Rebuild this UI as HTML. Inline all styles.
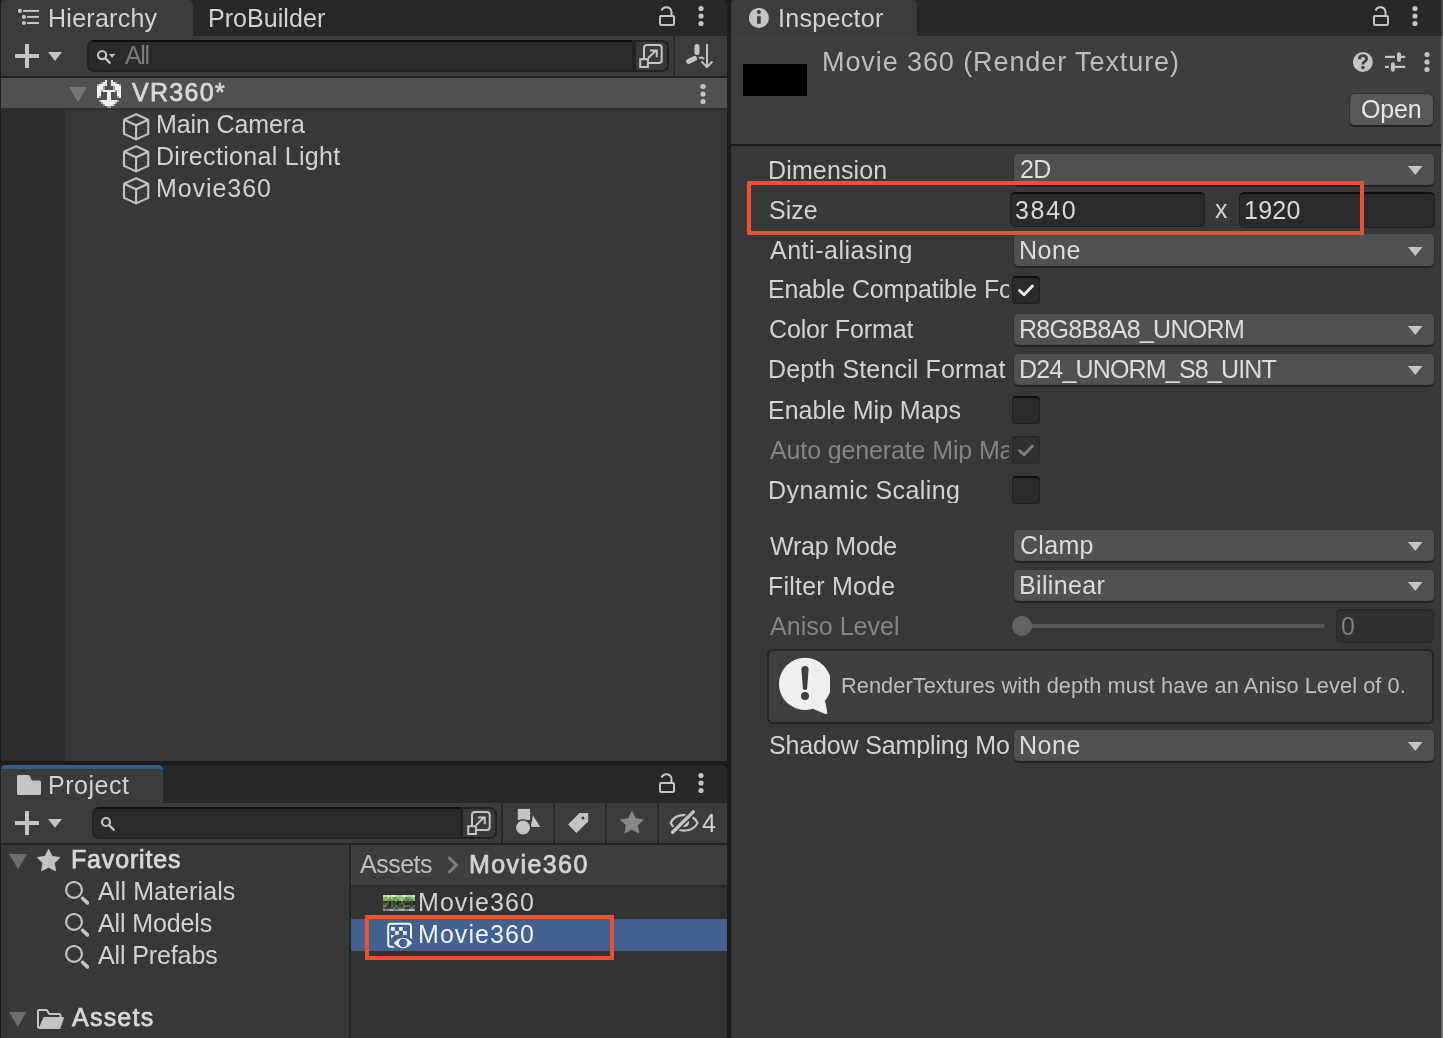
<!DOCTYPE html>
<html><head><meta charset="utf-8"><style>
html,body{margin:0;padding:0;width:1443px;height:1038px;overflow:hidden;background:#1C1C1C;}
body{position:relative;font-family:"Liberation Sans",sans-serif;}
body>div,body>svg{position:absolute;}
.t{white-space:nowrap;will-change:transform;}
</style></head><body>
<div style="left:0px;top:0px;width:1443px;height:1038px;background:#1C1C1C;"></div>
<div style="left:1px;top:0px;width:726px;height:35.5px;background:#282828;border-top-right-radius:5px;"></div>
<div style="left:1px;top:0px;width:192px;height:35.5px;background:#3C3C3C;border-top-left-radius:5px;border-top-right-radius:5px;"></div>
<svg style="left:17px;top:8px;" width="24" height="18" viewBox="0 0 24 18"><circle cx="2.9" cy="2.9" r="2.05" fill="#C4C4C4"/><circle cx="6.9" cy="8.9" r="2.05" fill="#C4C4C4"/><circle cx="6.9" cy="15" r="2.05" fill="#C4C4C4"/><rect x="6.1" y="1.9" width="15.9" height="2" fill="#C4C4C4"/><rect x="10.1" y="7.9" width="11.9" height="2" fill="#C4C4C4"/><rect x="10.1" y="14" width="11.9" height="2" fill="#C4C4C4"/></svg>
<div class="t" style="left:48.20px;top:5.84px;font-size:25px;line-height:25px;color:#D2D2D2;letter-spacing:0.262px;">Hierarchy</div>
<div class="t" style="left:207.80px;top:5.84px;font-size:25px;line-height:25px;color:#D2D2D2;letter-spacing:0.056px;">ProBuilder</div>
<svg style="left:658px;top:5.199999999999999px;" width="20" height="24" viewBox="0 0 20 24"><rect x="2" y="11" width="14" height="9" fill="none" stroke="#C4C4C4" stroke-width="2" rx="1"/><path d="M3.5 5.5 A5.2 5.2 0 0 1 13.5 7 V11" fill="none" stroke="#C4C4C4" stroke-width="2"/></svg>
<svg style="left:697px;top:4px;" width="8" height="24" viewBox="0 0 8 24"><circle cx="4" cy="4.5" r="2.6" fill="#C4C4C4"/><circle cx="4" cy="12" r="2.6" fill="#C4C4C4"/><circle cx="4" cy="19.5" r="2.6" fill="#C4C4C4"/></svg>
<div style="left:1px;top:35.5px;width:726px;height:40.5px;background:#3C3C3C;"></div>
<div style="left:15px;top:54px;width:24px;height:4px;background:#C4C4C4;"></div>
<div style="left:25px;top:44px;width:4px;height:24px;background:#C4C4C4;"></div>
<svg style="left:48px;top:52px;" width="14" height="9" viewBox="0 0 14 9"><path d="M0 0 L14 0 L7.0 9 Z" fill="#C4C4C4"/></svg>
<div style="left:87px;top:40px;width:581.5px;height:31.5px;background:#222222;border-radius:7px;"></div>
<div style="left:89px;top:42px;width:543px;height:27.5px;background:#2A2A2A;border-radius:5px 0 0 5px;"></div>
<div style="left:92px;top:40px;width:540px;height:2px;background:#0E0E0E;"></div>
<div style="left:635.5px;top:42px;width:31.0px;height:27.5px;background:#3A3A3A;border-radius:0 5px 5px 0;"></div>
<svg style="left:94.80000000000001px;top:47.8px;" width="22.2" height="22.2" viewBox="0 0 22.2 22.2"><circle cx="7.1" cy="7.1" r="4.1" fill="none" stroke="#C4C4C4" stroke-width="2.2"/><line x1="10.174999999999999" y1="10.174999999999999" x2="15.375" y2="15.375" stroke="#C4C4C4" stroke-width="2.4" stroke-linecap="butt"/></svg>
<svg style="left:108.9px;top:54px;" width="6.2" height="4" viewBox="0 0 6.2 4"><path d="M0 0 L6.2 0 L3.1 4 Z" fill="#C4C4C4"/></svg>
<div class="t" style="left:125.40px;top:42.64px;font-size:25px;line-height:25px;color:#7B7B7B;letter-spacing:-1.325px;">All</div>
<svg style="left:639px;top:42.5px;" width="26" height="26" viewBox="0 0 26 26"><rect x="5" y="2" width="17.7" height="17.9" rx="3" fill="none" stroke="#C4C4C4" stroke-width="2"/><rect x="1.2" y="16.2" width="7.7" height="7.8" fill="#3A3A3A" stroke="#C4C4C4" stroke-width="2"/><path d="M9 15.2 L17.4 7 M11 7.4 H17.8 V14.3" fill="none" stroke="#C4C4C4" stroke-width="2"/></svg>
<div style="left:673px;top:35.5px;width:2px;height:40.5px;background:#2A2A2A;"></div>
<svg style="left:684px;top:43px;" width="32" height="27" viewBox="0 0 32 27"><path d="M13 3.5 V9.5" stroke="#C4C4C4" stroke-width="5" stroke-linecap="round"/><path d="M4.5 18.5 L10.5 15.5" stroke="#C4C4C4" stroke-width="5" stroke-linecap="round"/><path d="M15 15 Q18 13.5 20 16" stroke="#C4C4C4" stroke-width="2" fill="none"/><path d="M23 1 V24 M17.5 18.5 L23 24 L28.5 18.5" stroke="#C4C4C4" stroke-width="2" fill="none"/></svg>
<div style="left:1px;top:76px;width:726px;height:2px;background:#232323;"></div>
<div style="left:1px;top:78px;width:726px;height:30px;background:#505050;"></div>
<svg style="left:69px;top:87px;" width="18" height="15" viewBox="0 0 18 15"><path d="M0 0 L18 0 L9.0 15 Z" fill="#767676"/></svg>
<svg style="left:97px;top:80px;shape-rendering:crispEdges;" width="24" height="28" viewBox="0 0 24 28"><rect x="8" y="0" width="2" height="2" fill="#F0F0F0"/><rect x="14" y="0" width="2" height="2" fill="#F0F0F0"/><rect x="4" y="2" width="2" height="2" fill="#A0A0A0"/><rect x="6" y="2" width="2" height="2" fill="#F0F0F0"/><rect x="8" y="2" width="2" height="2" fill="#F0F0F0"/><rect x="14" y="2" width="2" height="2" fill="#F0F0F0"/><rect x="16" y="2" width="2" height="2" fill="#F0F0F0"/><rect x="18" y="2" width="2" height="2" fill="#A0A0A0"/><rect x="0" y="4" width="2" height="2" fill="#A0A0A0"/><rect x="2" y="4" width="2" height="2" fill="#F0F0F0"/><rect x="4" y="4" width="2" height="2" fill="#F0F0F0"/><rect x="6" y="4" width="2" height="2" fill="#F0F0F0"/><rect x="8" y="4" width="2" height="2" fill="#F0F0F0"/><rect x="14" y="4" width="2" height="2" fill="#F0F0F0"/><rect x="16" y="4" width="2" height="2" fill="#F0F0F0"/><rect x="18" y="4" width="2" height="2" fill="#F0F0F0"/><rect x="20" y="4" width="2" height="2" fill="#F0F0F0"/><rect x="22" y="4" width="2" height="2" fill="#A0A0A0"/><rect x="0" y="6" width="2" height="2" fill="#F0F0F0"/><rect x="2" y="6" width="2" height="2" fill="#F0F0F0"/><rect x="4" y="6" width="2" height="2" fill="#F0F0F0"/><rect x="6" y="6" width="2" height="2" fill="#A0A0A0"/><rect x="16" y="6" width="2" height="2" fill="#A0A0A0"/><rect x="18" y="6" width="2" height="2" fill="#F0F0F0"/><rect x="20" y="6" width="2" height="2" fill="#F0F0F0"/><rect x="22" y="6" width="2" height="2" fill="#F0F0F0"/><rect x="0" y="8" width="2" height="2" fill="#F0F0F0"/><rect x="2" y="8" width="2" height="2" fill="#F0F0F0"/><rect x="4" y="8" width="2" height="2" fill="#F0F0F0"/><rect x="6" y="8" width="2" height="2" fill="#A0A0A0"/><rect x="16" y="8" width="2" height="2" fill="#A0A0A0"/><rect x="18" y="8" width="2" height="2" fill="#F0F0F0"/><rect x="20" y="8" width="2" height="2" fill="#F0F0F0"/><rect x="22" y="8" width="2" height="2" fill="#F0F0F0"/><rect x="0" y="10" width="2" height="2" fill="#F0F0F0"/><rect x="2" y="10" width="2" height="2" fill="#F0F0F0"/><rect x="4" y="10" width="2" height="2" fill="#A0A0A0"/><rect x="6" y="10" width="2" height="2" fill="#F0F0F0"/><rect x="8" y="10" width="2" height="2" fill="#F0F0F0"/><rect x="10" y="10" width="2" height="2" fill="#F0F0F0"/><rect x="12" y="10" width="2" height="2" fill="#F0F0F0"/><rect x="14" y="10" width="2" height="2" fill="#F0F0F0"/><rect x="16" y="10" width="2" height="2" fill="#F0F0F0"/><rect x="18" y="10" width="2" height="2" fill="#A0A0A0"/><rect x="20" y="10" width="2" height="2" fill="#F0F0F0"/><rect x="22" y="10" width="2" height="2" fill="#F0F0F0"/><rect x="0" y="12" width="2" height="2" fill="#F0F0F0"/><rect x="2" y="12" width="2" height="2" fill="#F0F0F0"/><rect x="10" y="12" width="2" height="2" fill="#F0F0F0"/><rect x="12" y="12" width="2" height="2" fill="#F0F0F0"/><rect x="20" y="12" width="2" height="2" fill="#F0F0F0"/><rect x="22" y="12" width="2" height="2" fill="#F0F0F0"/><rect x="0" y="14" width="2" height="2" fill="#F0F0F0"/><rect x="2" y="14" width="2" height="2" fill="#F0F0F0"/><rect x="10" y="14" width="2" height="2" fill="#F0F0F0"/><rect x="12" y="14" width="2" height="2" fill="#F0F0F0"/><rect x="20" y="14" width="2" height="2" fill="#F0F0F0"/><rect x="22" y="14" width="2" height="2" fill="#F0F0F0"/><rect x="0" y="16" width="2" height="2" fill="#F0F0F0"/><rect x="2" y="16" width="2" height="2" fill="#A0A0A0"/><rect x="10" y="16" width="2" height="2" fill="#F0F0F0"/><rect x="12" y="16" width="2" height="2" fill="#F0F0F0"/><rect x="20" y="16" width="2" height="2" fill="#A0A0A0"/><rect x="22" y="16" width="2" height="2" fill="#F0F0F0"/><rect x="10" y="18" width="2" height="2" fill="#F0F0F0"/><rect x="12" y="18" width="2" height="2" fill="#F0F0F0"/><rect x="2" y="20" width="2" height="2" fill="#A0A0A0"/><rect x="4" y="20" width="2" height="2" fill="#F0F0F0"/><rect x="6" y="20" width="2" height="2" fill="#F0F0F0"/><rect x="8" y="20" width="2" height="2" fill="#F0F0F0"/><rect x="10" y="20" width="2" height="2" fill="#F0F0F0"/><rect x="12" y="20" width="2" height="2" fill="#F0F0F0"/><rect x="14" y="20" width="2" height="2" fill="#F0F0F0"/><rect x="16" y="20" width="2" height="2" fill="#F0F0F0"/><rect x="18" y="20" width="2" height="2" fill="#F0F0F0"/><rect x="20" y="20" width="2" height="2" fill="#A0A0A0"/><rect x="4" y="22" width="2" height="2" fill="#A0A0A0"/><rect x="6" y="22" width="2" height="2" fill="#F0F0F0"/><rect x="8" y="22" width="2" height="2" fill="#F0F0F0"/><rect x="10" y="22" width="2" height="2" fill="#F0F0F0"/><rect x="12" y="22" width="2" height="2" fill="#F0F0F0"/><rect x="14" y="22" width="2" height="2" fill="#F0F0F0"/><rect x="16" y="22" width="2" height="2" fill="#F0F0F0"/><rect x="18" y="22" width="2" height="2" fill="#A0A0A0"/><rect x="6" y="24" width="2" height="2" fill="#A0A0A0"/><rect x="8" y="24" width="2" height="2" fill="#F0F0F0"/><rect x="10" y="24" width="2" height="2" fill="#F0F0F0"/><rect x="12" y="24" width="2" height="2" fill="#F0F0F0"/><rect x="14" y="24" width="2" height="2" fill="#F0F0F0"/><rect x="16" y="24" width="2" height="2" fill="#A0A0A0"/><rect x="10" y="26" width="2" height="2" fill="#A0A0A0"/><rect x="12" y="26" width="2" height="2" fill="#A0A0A0"/></svg>
<div class="t" style="left:132.00px;top:79.84px;font-size:25px;line-height:25px;color:#D8D8D8;letter-spacing:1.290px;-webkit-text-stroke:0.75px #D8D8D8;">VR360*</div>
<svg style="left:699.2px;top:82px;" width="8" height="24" viewBox="0 0 8 24"><circle cx="4" cy="4.5" r="2.6" fill="#C4C4C4"/><circle cx="4" cy="12" r="2.6" fill="#C4C4C4"/><circle cx="4" cy="19.5" r="2.6" fill="#C4C4C4"/></svg>
<div style="left:1px;top:108px;width:726px;height:2px;background:#2D2D2D;"></div>
<div style="left:1px;top:110px;width:726px;height:651px;background:#383838;"></div>
<div style="left:1px;top:110px;width:64px;height:651px;background:#2C2C2C;"></div>
<svg style="left:122px;top:111.5px;" width="28" height="30" viewBox="0 0 28 30"><path d="M14.1 2.3 L26.2 7.7 V21.9 L14.1 27.4 L2 21.9 V7.7 Z M2 7.7 L14.1 13.3 L26.2 7.7 M14.1 13.3 V27.4" fill="none" stroke="#C4C4C4" stroke-width="2.1" stroke-linejoin="round"/></svg>
<div class="t" style="left:156.20px;top:111.84px;font-size:25px;line-height:25px;color:#D2D2D2;letter-spacing:-0.125px;">Main Camera</div>
<svg style="left:122px;top:143.5px;" width="28" height="30" viewBox="0 0 28 30"><path d="M14.1 2.3 L26.2 7.7 V21.9 L14.1 27.4 L2 21.9 V7.7 Z M2 7.7 L14.1 13.3 L26.2 7.7 M14.1 13.3 V27.4" fill="none" stroke="#C4C4C4" stroke-width="2.1" stroke-linejoin="round"/></svg>
<div class="t" style="left:156.20px;top:143.84px;font-size:25px;line-height:25px;color:#D2D2D2;letter-spacing:0.312px;">Directional Light</div>
<svg style="left:122px;top:175.5px;" width="28" height="30" viewBox="0 0 28 30"><path d="M14.1 2.3 L26.2 7.7 V21.9 L14.1 27.4 L2 21.9 V7.7 Z M2 7.7 L14.1 13.3 L26.2 7.7 M14.1 13.3 V27.4" fill="none" stroke="#C4C4C4" stroke-width="2.1" stroke-linejoin="round"/></svg>
<div class="t" style="left:156.20px;top:175.84px;font-size:25px;line-height:25px;color:#D2D2D2;letter-spacing:0.929px;">Movie360</div>
<div style="left:1px;top:765px;width:726px;height:38px;background:#282828;border-top-right-radius:5px;"></div>
<div style="left:1px;top:765px;width:162px;height:38px;background:#3C3C3C;border-top-left-radius:5px;border-top-right-radius:5px;border-top:4px solid #395E88;box-sizing:border-box;"></div>
<svg style="left:16px;top:774px;" width="26" height="22" viewBox="0 0 26 22"><path d="M2.5 1 H12 Q13 1 13.6 2 L16 6.5 H23.5 Q25 6.5 25 8 V19.5 Q25 21 23.5 21 H2.5 Q1 21 1 19.5 V2.5 Q1 1 2.5 1 Z" fill="#C4C4C4"/></svg>
<div class="t" style="left:48.20px;top:772.84px;font-size:25px;line-height:25px;color:#D2D2D2;letter-spacing:0.517px;">Project</div>
<svg style="left:658px;top:772.2px;" width="20" height="24" viewBox="0 0 20 24"><rect x="2" y="11" width="14" height="9" fill="none" stroke="#C4C4C4" stroke-width="2" rx="1"/><path d="M3.5 5.5 A5.2 5.2 0 0 1 13.5 7 V11" fill="none" stroke="#C4C4C4" stroke-width="2"/></svg>
<svg style="left:697px;top:771px;" width="8" height="24" viewBox="0 0 8 24"><circle cx="4" cy="4.5" r="2.6" fill="#C4C4C4"/><circle cx="4" cy="12" r="2.6" fill="#C4C4C4"/><circle cx="4" cy="19.5" r="2.6" fill="#C4C4C4"/></svg>
<div style="left:1px;top:803px;width:726px;height:39.5px;background:#3C3C3C;"></div>
<div style="left:15px;top:821px;width:24px;height:4px;background:#C4C4C4;"></div>
<div style="left:25px;top:811px;width:4px;height:24px;background:#C4C4C4;"></div>
<svg style="left:48px;top:819px;" width="14" height="8.7" viewBox="0 0 14 8.7"><path d="M0 0 L14 0 L7.0 8.7 Z" fill="#C4C4C4"/></svg>
<div style="left:91.5px;top:807px;width:405.0px;height:31.5px;background:#222222;border-radius:7px;"></div>
<div style="left:93.5px;top:809px;width:366.0px;height:27.5px;background:#2A2A2A;border-radius:5px 0 0 5px;"></div>
<div style="left:96.5px;top:807px;width:363.0px;height:2px;background:#0E0E0E;"></div>
<div style="left:463.0px;top:809px;width:31.5px;height:27.5px;background:#3A3A3A;border-radius:0 5px 5px 0;"></div>
<svg style="left:99.0px;top:814.9px;" width="22.0" height="22.0" viewBox="0 0 22.0 22.0"><circle cx="7.0" cy="7.0" r="4.0" fill="none" stroke="#C4C4C4" stroke-width="2.2"/><line x1="10.0" y1="10.0" x2="15.3" y2="15.3" stroke="#C4C4C4" stroke-width="2.4" stroke-linecap="butt"/></svg>
<svg style="left:467px;top:809.5px;" width="26" height="26" viewBox="0 0 26 26"><rect x="5" y="2" width="17.7" height="17.9" rx="3" fill="none" stroke="#C4C4C4" stroke-width="2"/><rect x="1.2" y="16.2" width="7.7" height="7.8" fill="#3A3A3A" stroke="#C4C4C4" stroke-width="2"/><path d="M9 15.2 L17.4 7 M11 7.4 H17.8 V14.3" fill="none" stroke="#C4C4C4" stroke-width="2"/></svg>
<div style="left:501.3px;top:803px;width:2.0px;height:39.5px;background:#2A2A2A;"></div>
<div style="left:553px;top:803px;width:2px;height:39.5px;background:#2A2A2A;"></div>
<div style="left:605.2px;top:803px;width:2.0px;height:39.5px;background:#2A2A2A;"></div>
<div style="left:657px;top:803px;width:2px;height:39.5px;background:#2A2A2A;"></div>
<svg style="left:514px;top:808px;" width="28" height="28" viewBox="0 0 28 28"><rect x="3.8" y="0.9" width="12.3" height="11.1" fill="#C4C4C4"/><path d="M19.1 7.5 L26.2 18.9 H16.5 Z" fill="#C4C4C4"/><circle cx="9" cy="19.6" r="7.8" fill="#C4C4C4" stroke="#3C3C3C" stroke-width="1.6"/></svg>
<svg style="left:566px;top:811px;" width="24" height="24" viewBox="0 0 24 24"><path d="M2.1 13.5 L13.5 2 H22.2 V10.4 L10.4 22 Z" fill="#C4C4C4"/><circle cx="17" cy="6.9" r="1.5" fill="#3C3C3C"/></svg>
<svg style="left:619px;top:811px;" width="26" height="24" viewBox="0 0 26 24"><path d="M12.90 0.50 L16.40 7.59 L24.22 8.72 L18.56 14.24 L19.89 22.03 L12.90 18.35 L5.91 22.03 L7.24 14.24 L1.58 8.72 L9.40 7.59 Z" fill="#888888" stroke="#888888" stroke-width="0.8" stroke-linejoin="round"/></svg>
<svg style="left:669px;top:809px;" width="31" height="26" viewBox="0 0 31 26"><path d="M1.6 13.9 C6.5 3.6 23.6 3.6 28.5 13.9 C23.6 24.2 6.5 24.2 1.6 13.9 Z" fill="none" stroke="#C4C4C4" stroke-width="2.2"/><circle cx="15.5" cy="13.4" r="4.6" fill="#C4C4C4"/><path d="M3.6 23.2 L24.3 2.9" stroke="#3C3C3C" stroke-width="6.5"/><path d="M3.6 23.2 L24.3 2.9" stroke="#C4C4C4" stroke-width="3.4" stroke-linecap="round"/></svg>
<div class="t" style="left:702.40px;top:810.74px;font-size:25px;line-height:25px;color:#D2D2D2;">4</div>
<div style="left:1px;top:842.5px;width:726px;height:2.5px;background:#232323;"></div>
<div style="left:1px;top:845px;width:348px;height:193px;background:#383838;"></div>
<div style="left:349px;top:845px;width:2px;height:193px;background:#232323;"></div>
<div style="left:351px;top:845px;width:376px;height:40px;background:#3E3E3E;"></div>
<div style="left:351px;top:885px;width:376px;height:2px;background:#2B2B2B;"></div>
<div style="left:351px;top:887px;width:376px;height:151px;background:#333333;"></div>
<svg style="left:9px;top:854px;" width="18" height="15" viewBox="0 0 18 15"><path d="M0 0 L18 0 L9.0 15 Z" fill="#6E6E6E"/></svg>
<svg style="left:36px;top:849px;" width="26" height="23" viewBox="0 0 26 23"><path d="M12.60 0.20 L16.13 7.35 L24.01 8.49 L18.31 14.05 L19.65 21.91 L12.60 18.20 L5.55 21.91 L6.89 14.05 L1.19 8.49 L9.07 7.35 Z" fill="#C4C4C4" stroke="#C4C4C4" stroke-width="0.8" stroke-linejoin="round"/></svg>
<div class="t" style="left:70.50px;top:846.64px;font-size:25px;line-height:25px;color:#D8D8D8;letter-spacing:0.825px;-webkit-text-stroke:0.75px #D8D8D8;">Favorites</div>
<svg style="left:62px;top:878px;" width="30" height="30" viewBox="0 0 30 30"><circle cx="12" cy="11.9" r="7.9" fill="none" stroke="#C4C4C4" stroke-width="2.2"/><path d="M20.6 20.3 L25.4 24.9" stroke="#C4C4C4" stroke-width="3.6" stroke-linecap="round"/></svg>
<div class="t" style="left:97.80px;top:878.84px;font-size:25px;line-height:25px;color:#D2D2D2;letter-spacing:0.100px;">All Materials</div>
<svg style="left:62px;top:910px;" width="30" height="30" viewBox="0 0 30 30"><circle cx="12" cy="11.9" r="7.9" fill="none" stroke="#C4C4C4" stroke-width="2.2"/><path d="M20.6 20.3 L25.4 24.9" stroke="#C4C4C4" stroke-width="3.6" stroke-linecap="round"/></svg>
<div class="t" style="left:97.80px;top:910.84px;font-size:25px;line-height:25px;color:#D2D2D2;letter-spacing:-0.127px;">All Models</div>
<svg style="left:62px;top:942px;" width="30" height="30" viewBox="0 0 30 30"><circle cx="12" cy="11.9" r="7.9" fill="none" stroke="#C4C4C4" stroke-width="2.2"/><path d="M20.6 20.3 L25.4 24.9" stroke="#C4C4C4" stroke-width="3.6" stroke-linecap="round"/></svg>
<div class="t" style="left:97.80px;top:942.84px;font-size:25px;line-height:25px;color:#D2D2D2;letter-spacing:-0.120px;">All Prefabs</div>
<svg style="left:9px;top:1012px;" width="17.5" height="15" viewBox="0 0 17.5 15"><path d="M0 0 L17.5 0 L8.75 15 Z" fill="#6E6E6E"/></svg>
<svg style="left:36px;top:1008px;" width="29" height="22" viewBox="0 0 29 22"><path d="M2 20 V3 Q2 1.9 3.1 1.9 H10.6 L13.4 6.1 H23.5 Q24.5 6.1 24.5 7.1 V9.5" fill="none" stroke="#C4C4C4" stroke-width="2"/><path d="M7.3 9.6 Q7.8 9 8.6 9 H27 Q28.3 9.1 27.9 10.3 L24.6 20.1 Q24.3 20.9 23.4 20.9 H2.4 Z" fill="#C4C4C4"/></svg>
<div class="t" style="left:72.20px;top:1005.14px;font-size:25px;line-height:25px;color:#D8D8D8;letter-spacing:1.230px;-webkit-text-stroke:0.75px #D8D8D8;">Assets</div>
<div class="t" style="left:360.40px;top:851.84px;font-size:25px;line-height:25px;color:#BEBEBE;letter-spacing:-0.490px;">Assets</div>
<svg style="left:446px;top:855px;" width="14" height="20" viewBox="0 0 14 20"><path d="M2.5 2 L10.5 10 L2.5 18" fill="none" stroke="#7D7D7D" stroke-width="3"/></svg>
<div class="t" style="left:468.50px;top:851.84px;font-size:25px;line-height:25px;color:#D2D2D2;letter-spacing:1.414px;-webkit-text-stroke:0.75px #D2D2D2;">Movie360</div>
<svg style="left:383px;top:895px;shape-rendering:crispEdges;" width="32" height="16" viewBox="0 0 32 16"><rect x="0" y="0" width="2" height="2" fill="rgb(200, 233, 206)"/><rect x="2" y="0" width="2" height="2" fill="rgb(163, 203, 154)"/><rect x="4" y="0" width="2" height="2" fill="rgb(219, 227, 207)"/><rect x="6" y="0" width="2" height="2" fill="rgb(183, 209, 185)"/><rect x="8" y="0" width="2" height="2" fill="rgb(210, 240, 200)"/><rect x="10" y="0" width="2" height="2" fill="rgb(238, 251, 233)"/><rect x="12" y="0" width="2" height="2" fill="rgb(177, 215, 180)"/><rect x="14" y="0" width="2" height="2" fill="rgb(180, 205, 164)"/><rect x="16" y="0" width="2" height="2" fill="rgb(168, 187, 168)"/><rect x="18" y="0" width="2" height="2" fill="rgb(181, 210, 166)"/><rect x="20" y="0" width="2" height="2" fill="rgb(227, 255, 223)"/><rect x="22" y="0" width="2" height="2" fill="rgb(181, 221, 186)"/><rect x="24" y="0" width="2" height="2" fill="rgb(190, 207, 186)"/><rect x="26" y="0" width="2" height="2" fill="rgb(181, 189, 172)"/><rect x="28" y="0" width="2" height="2" fill="rgb(196, 223, 184)"/><rect x="30" y="0" width="2" height="2" fill="rgb(209, 238, 199)"/><rect x="0" y="2" width="2" height="2" fill="rgb(140, 178, 106)"/><rect x="2" y="2" width="2" height="2" fill="rgb(118, 174, 95)"/><rect x="4" y="2" width="2" height="2" fill="rgb(167, 202, 136)"/><rect x="6" y="2" width="2" height="2" fill="rgb(140, 163, 94)"/><rect x="8" y="2" width="2" height="2" fill="rgb(163, 195, 130)"/><rect x="10" y="2" width="2" height="2" fill="rgb(119, 157, 75)"/><rect x="12" y="2" width="2" height="2" fill="rgb(111, 152, 74)"/><rect x="14" y="2" width="2" height="2" fill="rgb(139, 187, 113)"/><rect x="16" y="2" width="2" height="2" fill="rgb(145, 185, 121)"/><rect x="18" y="2" width="2" height="2" fill="rgb(147, 186, 124)"/><rect x="20" y="2" width="2" height="2" fill="rgb(151, 194, 123)"/><rect x="22" y="2" width="2" height="2" fill="rgb(101, 138, 62)"/><rect x="24" y="2" width="2" height="2" fill="rgb(114, 140, 75)"/><rect x="26" y="2" width="2" height="2" fill="rgb(125, 168, 103)"/><rect x="28" y="2" width="2" height="2" fill="rgb(150, 177, 110)"/><rect x="30" y="2" width="2" height="2" fill="rgb(154, 199, 120)"/><rect x="0" y="4" width="2" height="2" fill="rgb(115, 159, 80)"/><rect x="2" y="4" width="2" height="2" fill="rgb(149, 190, 115)"/><rect x="4" y="4" width="2" height="2" fill="rgb(106, 149, 78)"/><rect x="6" y="4" width="2" height="2" fill="rgb(121, 154, 99)"/><rect x="8" y="4" width="2" height="2" fill="rgb(116, 157, 78)"/><rect x="10" y="4" width="2" height="2" fill="rgb(116, 160, 84)"/><rect x="12" y="4" width="2" height="2" fill="rgb(129, 181, 114)"/><rect x="14" y="4" width="2" height="2" fill="rgb(105, 148, 73)"/><rect x="16" y="4" width="2" height="2" fill="rgb(147, 187, 108)"/><rect x="18" y="4" width="2" height="2" fill="rgb(166, 198, 117)"/><rect x="20" y="4" width="2" height="2" fill="rgb(111, 155, 93)"/><rect x="22" y="4" width="2" height="2" fill="rgb(108, 155, 94)"/><rect x="24" y="4" width="2" height="2" fill="rgb(94, 131, 79)"/><rect x="26" y="4" width="2" height="2" fill="rgb(121, 147, 85)"/><rect x="28" y="4" width="2" height="2" fill="rgb(90, 134, 77)"/><rect x="30" y="4" width="2" height="2" fill="rgb(137, 193, 111)"/><rect x="0" y="6" width="2" height="2" fill="rgb(68, 75, 49)"/><rect x="2" y="6" width="2" height="2" fill="rgb(23, 50, 19)"/><rect x="4" y="6" width="2" height="2" fill="rgb(81, 90, 53)"/><rect x="6" y="6" width="2" height="2" fill="rgb(26, 48, 16)"/><rect x="8" y="6" width="2" height="2" fill="rgb(71, 97, 51)"/><rect x="10" y="6" width="2" height="2" fill="rgb(47, 57, 20)"/><rect x="12" y="6" width="2" height="2" fill="rgb(74, 105, 68)"/><rect x="14" y="6" width="2" height="2" fill="rgb(24, 47, 12)"/><rect x="16" y="6" width="2" height="2" fill="rgb(37, 48, 28)"/><rect x="18" y="6" width="2" height="2" fill="rgb(90, 99, 79)"/><rect x="20" y="6" width="2" height="2" fill="rgb(52, 54, 25)"/><rect x="22" y="6" width="2" height="2" fill="rgb(63, 77, 57)"/><rect x="24" y="6" width="2" height="2" fill="rgb(79, 83, 53)"/><rect x="26" y="6" width="2" height="2" fill="rgb(55, 63, 31)"/><rect x="28" y="6" width="2" height="2" fill="rgb(63, 75, 45)"/><rect x="30" y="6" width="2" height="2" fill="rgb(22, 33, 7)"/><rect x="0" y="8" width="2" height="2" fill="rgb(71, 90, 56)"/><rect x="2" y="8" width="2" height="2" fill="rgb(85, 100, 51)"/><rect x="4" y="8" width="2" height="2" fill="rgb(86, 92, 71)"/><rect x="6" y="8" width="2" height="2" fill="rgb(18, 42, 6)"/><rect x="8" y="8" width="2" height="2" fill="rgb(71, 94, 71)"/><rect x="10" y="8" width="2" height="2" fill="rgb(49, 74, 46)"/><rect x="12" y="8" width="2" height="2" fill="rgb(58, 76, 46)"/><rect x="14" y="8" width="2" height="2" fill="rgb(21, 40, 24)"/><rect x="16" y="8" width="2" height="2" fill="rgb(84, 83, 68)"/><rect x="18" y="8" width="2" height="2" fill="rgb(76, 84, 67)"/><rect x="20" y="8" width="2" height="2" fill="rgb(79, 90, 60)"/><rect x="22" y="8" width="2" height="2" fill="rgb(34, 37, 16)"/><rect x="24" y="8" width="2" height="2" fill="rgb(35, 44, 22)"/><rect x="26" y="8" width="2" height="2" fill="rgb(41, 63, 24)"/><rect x="28" y="8" width="2" height="2" fill="rgb(54, 78, 44)"/><rect x="30" y="8" width="2" height="2" fill="rgb(22, 47, 20)"/><rect x="0" y="10" width="2" height="2" fill="rgb(109, 122, 95)"/><rect x="2" y="10" width="2" height="2" fill="rgb(102, 124, 109)"/><rect x="4" y="10" width="2" height="2" fill="rgb(46, 47, 46)"/><rect x="6" y="10" width="2" height="2" fill="rgb(34, 45, 29)"/><rect x="8" y="10" width="2" height="2" fill="rgb(109, 103, 102)"/><rect x="10" y="10" width="2" height="2" fill="rgb(47, 63, 48)"/><rect x="12" y="10" width="2" height="2" fill="rgb(94, 118, 87)"/><rect x="14" y="10" width="2" height="2" fill="rgb(67, 79, 57)"/><rect x="16" y="10" width="2" height="2" fill="rgb(58, 66, 54)"/><rect x="18" y="10" width="2" height="2" fill="rgb(35, 57, 38)"/><rect x="20" y="10" width="2" height="2" fill="rgb(113, 120, 95)"/><rect x="22" y="10" width="2" height="2" fill="rgb(79, 91, 77)"/><rect x="24" y="10" width="2" height="2" fill="rgb(107, 108, 102)"/><rect x="26" y="10" width="2" height="2" fill="rgb(80, 79, 72)"/><rect x="28" y="10" width="2" height="2" fill="rgb(60, 60, 54)"/><rect x="30" y="10" width="2" height="2" fill="rgb(96, 98, 88)"/><rect x="0" y="12" width="2" height="2" fill="rgb(86, 100, 88)"/><rect x="2" y="12" width="2" height="2" fill="rgb(49, 75, 51)"/><rect x="4" y="12" width="2" height="2" fill="rgb(56, 62, 57)"/><rect x="6" y="12" width="2" height="2" fill="rgb(61, 80, 68)"/><rect x="8" y="12" width="2" height="2" fill="rgb(57, 65, 58)"/><rect x="10" y="12" width="2" height="2" fill="rgb(107, 115, 103)"/><rect x="12" y="12" width="2" height="2" fill="rgb(66, 75, 52)"/><rect x="14" y="12" width="2" height="2" fill="rgb(76, 96, 88)"/><rect x="16" y="12" width="2" height="2" fill="rgb(102, 98, 95)"/><rect x="18" y="12" width="2" height="2" fill="rgb(88, 101, 76)"/><rect x="20" y="12" width="2" height="2" fill="rgb(97, 108, 97)"/><rect x="22" y="12" width="2" height="2" fill="rgb(45, 61, 46)"/><rect x="24" y="12" width="2" height="2" fill="rgb(40, 53, 34)"/><rect x="26" y="12" width="2" height="2" fill="rgb(92, 106, 83)"/><rect x="28" y="12" width="2" height="2" fill="rgb(114, 126, 108)"/><rect x="30" y="12" width="2" height="2" fill="rgb(73, 89, 67)"/><rect x="0" y="14" width="2" height="2" fill="rgb(141, 135, 151)"/><rect x="2" y="14" width="2" height="2" fill="rgb(127, 114, 130)"/><rect x="4" y="14" width="2" height="2" fill="rgb(134, 127, 132)"/><rect x="6" y="14" width="2" height="2" fill="rgb(141, 157, 153)"/><rect x="8" y="14" width="2" height="2" fill="rgb(165, 166, 171)"/><rect x="10" y="14" width="2" height="2" fill="rgb(122, 142, 143)"/><rect x="12" y="14" width="2" height="2" fill="rgb(124, 132, 135)"/><rect x="14" y="14" width="2" height="2" fill="rgb(134, 142, 163)"/><rect x="16" y="14" width="2" height="2" fill="rgb(160, 155, 168)"/><rect x="18" y="14" width="2" height="2" fill="rgb(178, 172, 185)"/><rect x="20" y="14" width="2" height="2" fill="rgb(149, 162, 165)"/><rect x="22" y="14" width="2" height="2" fill="rgb(106, 127, 138)"/><rect x="24" y="14" width="2" height="2" fill="rgb(145, 149, 151)"/><rect x="26" y="14" width="2" height="2" fill="rgb(165, 187, 190)"/><rect x="28" y="14" width="2" height="2" fill="rgb(185, 185, 199)"/><rect x="30" y="14" width="2" height="2" fill="rgb(150, 156, 169)"/></svg>
<div class="t" style="left:418.00px;top:890.44px;font-size:25px;line-height:25px;color:#D2D2D2;letter-spacing:1.071px;">Movie360</div>
<div style="left:351px;top:919px;width:376px;height:32px;background:#42618F;"></div>
<svg style="left:385px;top:921px;" width="30" height="30" viewBox="0 0 30 30"><rect x="3.2" y="2.8" width="22.8" height="23" rx="2.5" fill="none" stroke="#F0F0F0" stroke-width="2"/><rect x="6" y="6" width="3.8" height="3.8" fill="#F0F0F0"/><rect x="14" y="6" width="3.8" height="3.8" fill="#F0F0F0"/><rect x="10" y="10" width="3.8" height="3.8" fill="#F0F0F0"/><rect x="18" y="10" width="3.8" height="3.8" fill="#F0F0F0"/><path d="M6 14 H9.8 L6 17.8 Z" fill="#F0F0F0"/><path d="M7 22 Q18 9 29 22 Q18 35 7 22 Z" fill="#F0F0F0" stroke="#42618F" stroke-width="2.5"/><circle cx="18.1" cy="22" r="4.2" fill="#42618F"/></svg>
<div class="t" style="left:418.00px;top:921.84px;font-size:25px;line-height:25px;color:#F2F2F2;letter-spacing:1.071px;">Movie360</div>
<div style="left:365px;top:915px;width:249px;height:45px;box-sizing:border-box;border:4px solid #EB5230;"></div>
<div style="left:731px;top:0px;width:710px;height:35.5px;background:#282828;"></div>
<div style="left:731px;top:0px;width:186px;height:35.5px;background:#3C3C3C;border-top-left-radius:5px;border-top-right-radius:5px;"></div>
<svg style="left:749px;top:8px;" width="21" height="21" viewBox="0 0 21 21"><circle cx="9.9" cy="9.9" r="10" fill="#C4C4C4"/><circle cx="9.9" cy="4.1" r="2" fill="#3C3C3C"/><rect x="8.1" y="8.2" width="3.6" height="7.6" fill="#3C3C3C"/></svg>
<div class="t" style="left:777.95px;top:5.84px;font-size:25px;line-height:25px;color:#D2D2D2;letter-spacing:0.319px;">Inspector</div>
<svg style="left:1372px;top:5.199999999999999px;" width="20" height="24" viewBox="0 0 20 24"><rect x="2" y="11" width="14" height="9" fill="none" stroke="#C4C4C4" stroke-width="2" rx="1"/><path d="M3.5 5.5 A5.2 5.2 0 0 1 13.5 7 V11" fill="none" stroke="#C4C4C4" stroke-width="2"/></svg>
<svg style="left:1411px;top:4px;" width="8" height="24" viewBox="0 0 8 24"><circle cx="4" cy="4.5" r="2.6" fill="#C4C4C4"/><circle cx="4" cy="12" r="2.6" fill="#C4C4C4"/><circle cx="4" cy="19.5" r="2.6" fill="#C4C4C4"/></svg>
<div style="left:731px;top:35.5px;width:710px;height:108.5px;background:#3E3E3E;"></div>
<div style="left:743px;top:64px;width:64px;height:32px;background:#000000;"></div>
<div class="t" style="left:821.84px;top:48.54px;font-size:27px;line-height:27px;color:#BDBDBD;letter-spacing:0.912px;">Movie 360 (Render Texture)</div>
<svg style="left:1352px;top:51px;" width="22" height="22" viewBox="0 0 22 22"><circle cx="10.9" cy="11" r="10" fill="#C4C4C4"/><path d="M7.3 8.2 Q7.3 4.6 10.9 4.6 Q14.6 4.6 14.6 7.8 Q14.6 9.8 12.5 10.8 Q10.9 11.6 10.9 13.4" fill="none" stroke="#3E3E3E" stroke-width="2.7"/><circle cx="10.9" cy="16.6" r="1.8" fill="#3E3E3E"/></svg>
<svg style="left:1384px;top:51px;" width="22" height="22" viewBox="0 0 22 22"><path d="M1 5.9 H11 M16.5 5.9 H21.2 M1 15.9 H4.8 M10.5 15.9 H21.2" stroke="#C4C4C4" stroke-width="2.3"/><path d="M15 3.1 V9 M8.9 13.2 V18.85" stroke="#C4C4C4" stroke-width="3.9" stroke-linecap="round"/></svg>
<svg style="left:1423px;top:50px;" width="8" height="24" viewBox="0 0 8 24"><circle cx="4" cy="4.5" r="2.6" fill="#C4C4C4"/><circle cx="4" cy="12" r="2.6" fill="#C4C4C4"/><circle cx="4" cy="19.5" r="2.6" fill="#C4C4C4"/></svg>
<div style="left:1348.5px;top:92.8px;width:85.2px;height:34px;box-sizing:border-box;background:#585858;border:1.3px solid #303030;border-bottom:2.2px solid #232323;border-radius:6px;"></div>
<div class="t" style="left:1361.00px;top:96.64px;font-size:25px;line-height:25px;color:#E6E6E6;letter-spacing:-0.167px;">Open</div>
<div style="left:731px;top:144px;width:710px;height:2px;background:#1A1A1A;"></div>
<div style="left:731px;top:146px;width:710px;height:892px;background:#383838;"></div>
<div style="left:1441px;top:0px;width:2px;height:35.5px;background:#444444;"></div>
<div style="left:1441px;top:35.5px;width:2px;height:1002.5px;background:#646464;"></div>
<div class="t" style="left:768.30px;top:158.14px;font-size:25px;line-height:25px;color:#D2D2D2;letter-spacing:0.137px;width:241.20px;overflow:hidden;">Dimension</div>
<div class="t" style="left:769.05px;top:197.94px;font-size:25px;line-height:25px;color:#D2D2D2;letter-spacing:-0.017px;width:240.45px;overflow:hidden;">Size</div>
<div class="t" style="left:770.30px;top:237.54px;font-size:25px;line-height:25px;color:#D2D2D2;letter-spacing:0.517px;width:239.20px;overflow:hidden;">Anti-aliasing</div>
<div class="t" style="left:768.30px;top:277.34px;font-size:25px;line-height:25px;color:#D2D2D2;letter-spacing:-0.128px;width:241.20px;overflow:hidden;">Enable Compatible Format</div>
<div class="t" style="left:769.05px;top:317.34px;font-size:25px;line-height:25px;color:#D2D2D2;letter-spacing:-0.136px;width:240.45px;overflow:hidden;">Color Format</div>
<div class="t" style="left:768.30px;top:357.34px;font-size:25px;line-height:25px;color:#D2D2D2;letter-spacing:0.132px;width:241.20px;overflow:hidden;">Depth Stencil Format</div>
<div class="t" style="left:768.30px;top:397.64px;font-size:25px;line-height:25px;color:#D2D2D2;letter-spacing:-0.014px;width:241.20px;overflow:hidden;">Enable Mip Maps</div>
<div class="t" style="left:770.30px;top:437.84px;font-size:25px;line-height:25px;color:#858585;letter-spacing:-0.129px;width:239.20px;overflow:hidden;">Auto generate Mip Maps</div>
<div class="t" style="left:768.30px;top:477.84px;font-size:25px;line-height:25px;color:#D2D2D2;letter-spacing:0.414px;width:241.20px;overflow:hidden;">Dynamic Scaling</div>
<div class="t" style="left:770.30px;top:533.54px;font-size:25px;line-height:25px;color:#D2D2D2;letter-spacing:-0.187px;width:239.20px;overflow:hidden;">Wrap Mode</div>
<div class="t" style="left:768.30px;top:573.64px;font-size:25px;line-height:25px;color:#D2D2D2;letter-spacing:0.200px;width:241.20px;overflow:hidden;">Filter Mode</div>
<div class="t" style="left:770.30px;top:613.74px;font-size:25px;line-height:25px;color:#858585;letter-spacing:0.025px;width:239.20px;overflow:hidden;">Aniso Level</div>
<div class="t" style="left:769.05px;top:733.44px;font-size:25px;line-height:25px;color:#D2D2D2;letter-spacing:-0.141px;width:240.45px;overflow:hidden;">Shadow Sampling Mode</div>
<div style="left:1012.5px;top:152.7px;width:422.29999999999995px;height:34.6px;box-sizing:border-box;background:#515151;border:1.5px solid #2F2F2F;border-top:1.3px solid #353535;border-bottom:2.2px solid #232323;border-radius:6px;"></div>
<svg style="left:1408px;top:166.29999999999998px;" width="14.5" height="9" viewBox="0 0 14.5 9"><path d="M0 0 L14.5 0 L7.25 9 Z" fill="#C4C4C4"/></svg>
<div class="t" style="left:1019.75px;top:157.14px;font-size:25px;line-height:25px;color:#DCDCDC;letter-spacing:-0.650px;">2D</div>
<div style="left:1009.5px;top:192px;width:195.5px;height:35px;box-sizing:border-box;background:#2A2A2A;border:1.5px solid #1F1F1F;border-top:2px solid #0E0E0E;border-radius:5px;"></div>
<div class="t" style="left:1015.30px;top:197.54px;font-size:25px;line-height:25px;color:#D8D8D8;letter-spacing:1.717px;">3840</div>
<div class="t" style="left:1215.25px;top:196.84px;font-size:25px;line-height:25px;color:#D2D2D2;">x</div>
<div style="left:1239px;top:192px;width:196px;height:35.5px;box-sizing:border-box;background:#2A2A2A;border:1.5px solid #1F1F1F;border-top:2px solid #0E0E0E;border-radius:5px;"></div>
<div class="t" style="left:1243.85px;top:197.54px;font-size:25px;line-height:25px;color:#D8D8D8;letter-spacing:0.267px;">1920</div>
<div style="left:1012.5px;top:233.2px;width:422.29999999999995px;height:34.6px;box-sizing:border-box;background:#515151;border:1.5px solid #2F2F2F;border-top:1.3px solid #353535;border-bottom:2.2px solid #232323;border-radius:6px;"></div>
<svg style="left:1408px;top:246.79999999999998px;" width="14.5" height="9" viewBox="0 0 14.5 9"><path d="M0 0 L14.5 0 L7.25 9 Z" fill="#C4C4C4"/></svg>
<div class="t" style="left:1019.00px;top:237.64px;font-size:25px;line-height:25px;color:#DCDCDC;letter-spacing:0.533px;">None</div>
<div style="left:1012px;top:276px;width:28px;height:28px;box-sizing:border-box;background:#2A2A2A;border:1.5px solid #1F1F1F;border-top:2px solid #0C0C0C;border-radius:3.5px;"></div>
<svg style="left:1016px;top:280px;" width="20" height="20" viewBox="0 0 20 20"><path d="M3.5 10.5 L8 14.8 L16.5 6" fill="none" stroke="#EEEEEE" stroke-width="2.8" stroke-linecap="round" stroke-linejoin="round"/></svg>
<div style="left:1012.5px;top:312.7px;width:422.29999999999995px;height:34.6px;box-sizing:border-box;background:#515151;border:1.5px solid #2F2F2F;border-top:1.3px solid #353535;border-bottom:2.2px solid #232323;border-radius:6px;"></div>
<svg style="left:1408px;top:326.3px;" width="14.5" height="9" viewBox="0 0 14.5 9"><path d="M0 0 L14.5 0 L7.25 9 Z" fill="#C4C4C4"/></svg>
<div class="t" style="left:1019.00px;top:317.14px;font-size:25px;line-height:25px;color:#DCDCDC;letter-spacing:-0.696px;">R8G8B8A8_UNORM</div>
<div style="left:1012.5px;top:352.7px;width:422.29999999999995px;height:34.6px;box-sizing:border-box;background:#515151;border:1.5px solid #2F2F2F;border-top:1.3px solid #353535;border-bottom:2.2px solid #232323;border-radius:6px;"></div>
<svg style="left:1408px;top:366.3px;" width="14.5" height="9" viewBox="0 0 14.5 9"><path d="M0 0 L14.5 0 L7.25 9 Z" fill="#C4C4C4"/></svg>
<div class="t" style="left:1019.00px;top:357.14px;font-size:25px;line-height:25px;color:#DCDCDC;letter-spacing:-0.819px;">D24_UNORM_S8_UINT</div>
<div style="left:1012px;top:396px;width:28px;height:28px;box-sizing:border-box;background:#2A2A2A;border:1.5px solid #1F1F1F;border-top:2px solid #0C0C0C;border-radius:3.5px;"></div>
<div style="left:1012px;top:436px;width:28px;height:28px;box-sizing:border-box;background:#303030;border:1.5px solid #2A2A2A;border-top:2px solid #262626;border-radius:3.5px;"></div>
<svg style="left:1016px;top:440px;" width="20" height="20" viewBox="0 0 20 20"><path d="M3.5 10.5 L8 14.8 L16.5 6" fill="none" stroke="#808080" stroke-width="2.8" stroke-linecap="round" stroke-linejoin="round"/></svg>
<div style="left:1012px;top:476px;width:28px;height:28px;box-sizing:border-box;background:#2A2A2A;border:1.5px solid #1F1F1F;border-top:2px solid #0C0C0C;border-radius:3.5px;"></div>
<div style="left:1012.5px;top:528.7px;width:422.29999999999995px;height:34.6px;box-sizing:border-box;background:#515151;border:1.5px solid #2F2F2F;border-top:1.3px solid #353535;border-bottom:2.2px solid #232323;border-radius:6px;"></div>
<svg style="left:1408px;top:542.3000000000001px;" width="14.5" height="9" viewBox="0 0 14.5 9"><path d="M0 0 L14.5 0 L7.25 9 Z" fill="#C4C4C4"/></svg>
<div class="t" style="left:1019.75px;top:533.14px;font-size:25px;line-height:25px;color:#DCDCDC;letter-spacing:0.300px;">Clamp</div>
<div style="left:1012.5px;top:568.7px;width:422.29999999999995px;height:34.6px;box-sizing:border-box;background:#515151;border:1.5px solid #2F2F2F;border-top:1.3px solid #353535;border-bottom:2.2px solid #232323;border-radius:6px;"></div>
<svg style="left:1408px;top:582.3000000000001px;" width="14.5" height="9" viewBox="0 0 14.5 9"><path d="M0 0 L14.5 0 L7.25 9 Z" fill="#C4C4C4"/></svg>
<div class="t" style="left:1019.00px;top:573.14px;font-size:25px;line-height:25px;color:#DCDCDC;letter-spacing:0.357px;">Bilinear</div>
<div style="left:1022px;top:624px;width:303px;height:4px;background:#595959;border-radius:2px;"></div>
<svg style="left:1011px;top:615px;" width="22" height="22" viewBox="0 0 22 22"><circle cx="11" cy="11" r="10" fill="#636363"/></svg>
<div style="left:1335.5px;top:608.5px;width:98.5px;height:34.5px;box-sizing:border-box;background:#303030;border:1.5px solid #2A2A2A;border-top:2px solid #262626;border-radius:5px;"></div>
<div class="t" style="left:1341.00px;top:613.84px;font-size:25px;line-height:25px;color:#7F7F7F;">0</div>
<div style="left:767px;top:648.5px;width:667px;height:75px;box-sizing:border-box;background:#3F3F3F;border:2px solid #242424;border-radius:6px;"></div>
<svg style="left:778px;top:657px;" width="52" height="60" viewBox="0 0 52 60"><circle cx="27.05" cy="26.9" r="26.1" fill="#EFEFEF"/><path d="M35.5 51.6 L47.6 56.6 Q49.2 57.2 48.9 55.6 L46.5 43.5 Z" fill="#EFEFEF" stroke="#EFEFEF" stroke-width="1" stroke-linejoin="round"/><path d="M23.4 12.7 Q23.4 9 27 9 Q30.6 9 30.6 12.7 L29.1 31.6 Q28.9 33 27 33 Q25.1 33 24.9 31.6 Z" fill="#3F3F3F"/><circle cx="27" cy="38.9" r="4" fill="#3F3F3F"/></svg>
<div class="t" style="left:840.86px;top:674.79px;font-size:21.75px;line-height:21.75px;color:#BEBEBE;letter-spacing:0.068px;">RenderTextures with depth must have an Aniso Level of 0.</div>
<div style="left:1012.5px;top:728.7px;width:422.29999999999995px;height:34.6px;box-sizing:border-box;background:#515151;border:1.5px solid #2F2F2F;border-top:1.3px solid #353535;border-bottom:2.2px solid #232323;border-radius:6px;"></div>
<svg style="left:1408px;top:742.3000000000001px;" width="14.5" height="9" viewBox="0 0 14.5 9"><path d="M0 0 L14.5 0 L7.25 9 Z" fill="#C4C4C4"/></svg>
<div class="t" style="left:1019.00px;top:733.14px;font-size:25px;line-height:25px;color:#DCDCDC;letter-spacing:0.533px;">None</div>
<div style="left:747px;top:181px;width:617px;height:54px;box-sizing:border-box;border:4px solid #EB5230;"></div>
</body></html>
